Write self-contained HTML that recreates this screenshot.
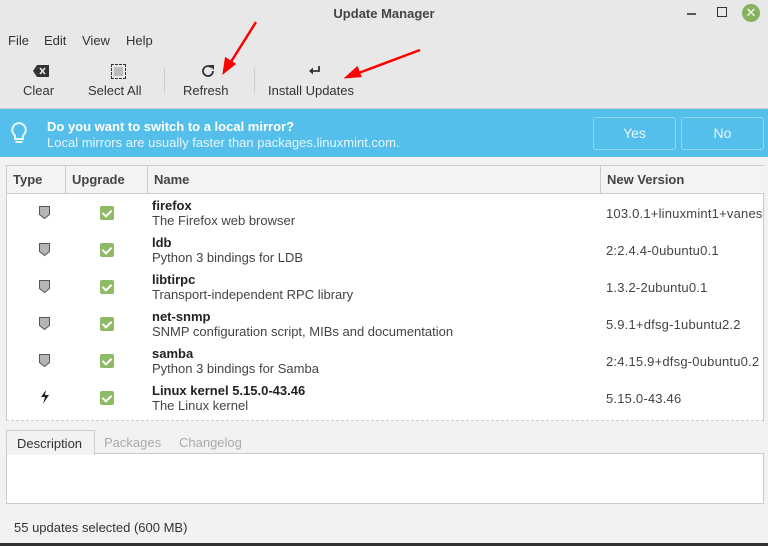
<!DOCTYPE html>
<html><head><style>
*{margin:0;padding:0;box-sizing:border-box}
body{width:768px;height:546px;position:relative;background:#f2f2f2;font-family:"Liberation Sans","DejaVu Sans",sans-serif;font-size:13px;color:#333;overflow:hidden}
.a{position:absolute;white-space:nowrap}
.top{position:absolute;left:0;top:0;width:768px;height:109px;background:#e8e8e8;border-bottom:1px solid #ccc}
.bar{position:absolute;left:0;top:109px;width:768px;height:48px;background:#55bfec}
.btn{position:absolute;top:117px;width:83px;height:33px;border:1px solid #8fd6f4;border-radius:3px;color:#e8f7fd;font-size:14px;text-align:center;line-height:31px}
.tbl{position:absolute;left:6px;top:165px;width:758px;height:256px;background:#fff;border:1px solid #ccc;border-bottom:1px dashed #ccc}
.hd{position:absolute;top:0;height:28px;border-right:1px solid #ccc;border-bottom:1px solid #ccc;background:#f3f3f3;font-weight:bold;line-height:28px;padding-left:6px;color:#444}
.ck{position:absolute;left:93px;width:14px;height:14px;background:#8dba64;border-radius:2px}
.ck:after{content:"";position:absolute;left:4px;top:2px;width:4px;height:7px;border:solid #fff;border-width:0 2px 2px 0;transform:rotate(45deg)}
.n{font-weight:bold;color:#222}
.sub{color:#444}
.v{letter-spacing:0.2px}
</style></head><body>
<div class="top"></div>
<div class="a" style="left:0;width:768px;text-align:center;top:6px;font-weight:bold;color:#444;font-size:13px">Update Manager</div>
<div class="a" style="left:687px;top:13px;width:9px;height:2px;background:#555"></div>
<div class="a" style="left:717px;top:7px;width:10px;height:10px;border:1.5px solid #333"></div>
<div class="a" style="left:742px;top:4px;width:18px;height:18px;border-radius:50%;background:#85b35f;color:#fff;text-align:center;line-height:18px;font-size:13px;font-weight:bold">✕</div>
<div class="a" style="left:8px;top:33px">File</div>
<div class="a" style="left:44px;top:33px">Edit</div>
<div class="a" style="left:82px;top:33px">View</div>
<div class="a" style="left:126px;top:33px">Help</div>
<svg class="a" style="left:33px;top:65px" width="16" height="12"><path d="M4 0H16V12H4L0 6Z" fill="#333"/><path d="M7 3l5 6M12 3l-5 6" stroke="#e8e8e8" stroke-width="1.6"/></svg>
<div class="a" style="left:111px;top:64px;width:15px;height:15px;border:1.5px dashed #333;background:#bbb;background-clip:content-box;padding:2px"></div>
<svg class="a" style="left:200px;top:63px" width="16" height="16"><path d="M13 8A5 5 0 1 1 11.5 4.5" fill="none" stroke="#333" stroke-width="1.8"/><path d="M9 2h5v5z" fill="#333"/></svg>
<svg class="a" style="left:308px;top:65px" width="14" height="12"><path d="M11 1v5H3" fill="none" stroke="#333" stroke-width="1.8"/><path d="M1 6l4-3.5v7z" fill="#333"/></svg>
<div class="a" style="left:23px;top:83px">Clear</div>
<div class="a" style="left:88px;top:83px">Select All</div>
<div class="a" style="left:164px;top:68px;width:1px;height:25px;background:#ccc"></div>
<div class="a" style="left:183px;top:83px">Refresh</div>
<div class="a" style="left:254px;top:68px;width:1px;height:25px;background:#ccc"></div>
<div class="a" style="left:268px;top:83px">Install Updates</div>
<svg class="a" style="left:0;top:0" width="768" height="110"><g stroke="#f00" stroke-width="2.5" fill="#f00"><line x1="256" y1="22" x2="229" y2="65"/><path d="M224 72l2-13 8 5z"/><line x1="420" y1="50" x2="356" y2="74"/><path d="M347 77l10-9 3 8z"/></g></svg>
<div class="bar"></div>
<svg class="a" style="left:10px;top:121px" width="18" height="26"><path d="M9 2a7 7 0 0 0-4 12.5V18h8v-3.5A7 7 0 0 0 9 2z" fill="none" stroke="#eaf7fd" stroke-width="2"/><path d="M5.5 21h7" stroke="#eaf7fd" stroke-width="2"/></svg>
<div class="a" style="left:47px;top:119px;color:#fff;font-weight:bold">Do you want to switch to a local mirror?</div>
<div class="a" style="left:47px;top:135px;color:#e6f6fd">Local mirrors are usually faster than packages.linuxmint.com.</div>
<div class="btn" style="left:593px">Yes</div>
<div class="btn" style="left:681px">No</div>
<div class="tbl">
<div class="hd" style="left:0;width:59px">Type</div>
<div class="hd" style="left:59px;width:82px">Upgrade</div>
<div class="hd" style="left:141px;width:453px">Name</div>
<div class="hd" style="left:594px;width:164px;border-right:none">New Version</div>
</div>
<svg class="a" style="left:38px;top:205px" width="14" height="200">
<g fill="#b5b5b5" stroke="#555" stroke-width="1"><path d="M1.5 1.5h10v8l-5 4-5-4z"/><path transform="translate(0,37)" d="M1.5 1.5h10v8l-5 4-5-4z"/><path transform="translate(0,74)" d="M1.5 1.5h10v8l-5 4-5-4z"/><path transform="translate(0,111)" d="M1.5 1.5h10v8l-5 4-5-4z"/><path transform="translate(0,148)" d="M1.5 1.5h10v8l-5 4-5-4z"/></g>
<path d="M8 185l-5 7h4l-2 7 6-9H7z" fill="#222"/>
</svg>
<div class="ck a" style="left:100px;top:206px"></div>
<div class="ck a" style="left:100px;top:243px"></div>
<div class="ck a" style="left:100px;top:280px"></div>
<div class="ck a" style="left:100px;top:317px"></div>
<div class="ck a" style="left:100px;top:354px"></div>
<div class="ck a" style="left:100px;top:391px"></div>
<div class="a n" style="left:152px;top:198px">firefox</div><div class="a sub" style="left:152px;top:213px">The Firefox web browser</div><div class="a sub v" style="left:606px;top:206px">103.0.1+linuxmint1+vanes</div>
<div class="a n" style="left:152px;top:235px">ldb</div><div class="a sub" style="left:152px;top:250px">Python 3 bindings for LDB</div><div class="a sub v" style="left:606px;top:243px">2:2.4.4-0ubuntu0.1</div>
<div class="a n" style="left:152px;top:272px">libtirpc</div><div class="a sub" style="left:152px;top:287px">Transport-independent RPC library</div><div class="a sub v" style="left:606px;top:280px">1.3.2-2ubuntu0.1</div>
<div class="a n" style="left:152px;top:309px">net-snmp</div><div class="a sub" style="left:152px;top:324px">SNMP configuration script, MIBs and documentation</div><div class="a sub v" style="left:606px;top:317px">5.9.1+dfsg-1ubuntu2.2</div>
<div class="a n" style="left:152px;top:346px">samba</div><div class="a sub" style="left:152px;top:361px">Python 3 bindings for Samba</div><div class="a sub v" style="left:606px;top:354px">2:4.15.9+dfsg-0ubuntu0.2</div>
<div class="a n" style="left:152px;top:383px">Linux kernel 5.15.0-43.46</div><div class="a sub" style="left:152px;top:398px">The Linux kernel</div><div class="a sub v" style="left:606px;top:391px">5.15.0-43.46</div>
<div class="a" style="left:6px;top:453px;width:758px;height:51px;background:#fff;border:1px solid #ccc"></div>
<div class="a" style="left:6px;top:430px;width:89px;height:25px;background:#f2f2f2;border:1px solid #ccc;border-bottom:none;padding:5px 0 0 10px;color:#333">Description</div>
<div class="a" style="left:104px;top:435px;color:#aaa">Packages</div>
<div class="a" style="left:179px;top:435px;color:#aaa">Changelog</div>
<div class="a" style="left:14px;top:520px">55 updates selected (600 MB)</div>
<div class="a" style="left:0;top:543px;width:768px;height:3px;background:#333"></div>
</body></html>
